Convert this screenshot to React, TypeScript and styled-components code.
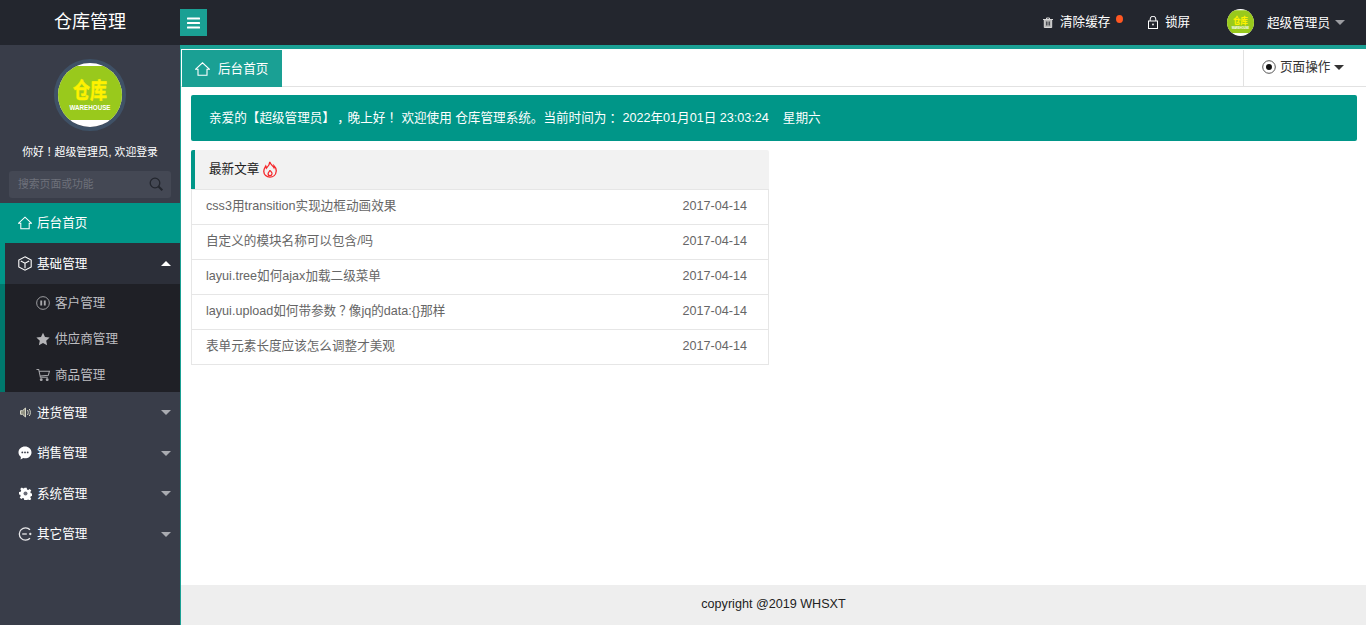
import React from "react";
import styled, { createGlobalStyle } from "styled-components";

const Global = createGlobalStyle`
  html, body { margin: 0; padding: 0; height: 100%; }
  body { font-family: "Liberation Sans", "Noto Sans CJK SC", sans-serif; font-size: 12.6px; line-height: 18px; color: #333; background: #fff; overflow: hidden; }
  * { box-sizing: border-box; }
`;

const Page = styled.div`
  display: flex;
  flex-direction: column;
  height: 625px;
  width: 1366px;
`;
const Header = styled.header`
  flex: 0 0 45px;
  display: flex;
  align-items: center;
  background: #23262e;
  color: #fff;
`;
const Brand = styled.div`
  width: 180px;
  text-align: center;
  font-size: 18px;
  line-height: 45px;
`;
const MenuButton = styled.div`
  width: 27px;
  height: 27px;
  background: #1aa094;
  display: flex;
  align-items: center;
  justify-content: center;
`;
const HeaderRight = styled.div`
  margin-left: auto;
  display: flex;
  align-items: center;
`;
const HeaderAction = styled.div<{ $w: number }>`
  position: relative;
  width: ${(p) => p.$w}px;
  display: flex;
  align-items: center;
  gap: 7px;
  line-height: 45px;
`;
const Dot = styled.span`
  position: absolute;
  left: 73px;
  top: 15px;
  width: 7px;
  height: 8px;
  border-radius: 50%;
  background: #ff5722;
`;
const UserBlock = styled.div`
  width: 139px;
  display: flex;
  align-items: center;
`;
const UserName = styled.span`
  margin-left: 13px;
  margin-right: 5px;
`;
const Caret = styled.span<{ $color: string; $up?: boolean }>`
  width: 0;
  height: 0;
  border-left: 5.5px solid transparent;
  border-right: 5.5px solid transparent;
  ${(p) =>
    p.$up
      ? `border-bottom: 5px solid ${p.$color};`
      : `border-top: 5px solid ${p.$color};`}
`;
const Punct = styled.span`
  display: inline-block;
  width: 1em;
  text-align: center;
  font-feature-settings: "palt";
`;
const Body = styled.div`
  flex: 1;
  display: flex;
  min-height: 0;
`;
const Sidebar = styled.aside`
  flex: 0 0 180px;
  background: #393d49;
  color: #fff;
  display: flex;
  flex-direction: column;
`;
const Profile = styled.div`
  padding-top: 14px;
  display: flex;
  flex-direction: column;
  align-items: center;
`;
const Greeting = styled.div`
  margin-top: 12px;
  font-size: 10.8px;
  line-height: 18px;
  height: 18px;
  white-space: nowrap;
`;
const SearchBox = styled.div`
  margin: 10px 9px 5px;
  width: 162px;
  height: 27px;
  border-radius: 3px;
  background: #444854;
  display: flex;
  align-items: center;
  padding: 0 8px 2px 9px;
  justify-content: space-between;
  color: #6e717b;
  font-size: 10.8px;
`;
const MenuItem = styled.div<{ $variant?: "active" | "open" }>`
  height: 40.4px;
  display: flex;
  align-items: center;
  padding-left: ${(p) => (p.$variant === "open" ? 13 : 18)}px;
  padding-right: 9px;
  padding-top: ${(p) => (p.$variant ? 0 : 2)}px;
  gap: 5px;
  background: ${(p) =>
    p.$variant === "active" ? "#009688" : p.$variant === "open" ? "#2c2f39" : "transparent"};
`;
const MenuLabel = styled.span`
  flex: 1;
`;
const IconSlot = styled.span`
  width: 14px;
  height: 16px;
  display: flex;
  align-items: center;
  justify-content: center;
`;
const OpenGroup = styled.div`
  border-left: 5px solid #009688;
`;
const SubGroup = styled.div`
  margin-left: -5px;
  border-left: 5px solid #00786c;
  background: #1f2026;
`;
const SubItem = styled.div`
  height: 36px;
  display: flex;
  align-items: center;
  padding-left: 31px;
  padding-top: 2px;
  gap: 5px;
  color: #bdbdc0;
`;
const Main = styled.main`
  flex: 1;
  display: flex;
  flex-direction: column;
  min-width: 0;
  border-left: 1px solid #1aa094;
  border-top: 4px solid #1aa094;
`;
const TabBar = styled.div`
  flex: 0 0 38px;
  display: flex;
  justify-content: space-between;
  padding: 1px 0 0 1px;
  border-bottom: 1px solid #e2e2e2;
`;
const Tab = styled.div`
  width: 100px;
  height: 37px;
  margin-bottom: -1px;
  background: #1aa094;
  color: #fff;
  display: flex;
  align-items: center;
  padding-left: 13px;
  gap: 8px;
`;
const PageOps = styled.div`
  width: 123px;
  height: 36px;
  border-left: 1px solid #e2e2e2;
  display: flex;
  align-items: center;
  padding-left: 18px;
  padding-bottom: 2px;
  color: #333;
  gap: 4px;
`;
const Content = styled.div`
  flex: 1;
  padding: 8px 9px 0 10px;
`;
const Banner = styled.div`
  height: 46px;
  background: #009688;
  border-radius: 2px;
  color: #fff;
  display: flex;
  align-items: center;
  padding-left: 18px;
  white-space: pre;
`;
const Card = styled.section`
  width: 578px;
  margin-top: 9px;
`;
const CardHead = styled.div`
  height: 39px;
  background: #f2f2f2;
  border-left: 4px solid #009688;
  border-radius: 2px 2px 0 0;
  display: flex;
  align-items: center;
  padding-left: 14px;
  padding-bottom: 1px;
  gap: 4px;
  color: #222;
`;
const List = styled.ul`
  list-style: none;
  margin: 0;
  padding: 0;
  border: 1px solid #e6e6e6;
`;
const Row = styled.li`
  height: 35px;
  display: flex;
  align-items: center;
  justify-content: space-between;
  padding: 0 21px 2px 14px;
  color: #666;
  border-bottom: 1px solid #e6e6e6;
  &:last-child { border-bottom: 0; height: 34px; }
`;
const Footer = styled.footer`
  flex: 0 0 40px;
  background: #eeeeee;
  display: flex;
  align-items: center;
  justify-content: center;
  padding-bottom: 2px;
  color: #222;
`;

const LogoMark = ({ size, ring }: { size: number; ring?: boolean }) => (
  <svg width={size} height={size} viewBox={ring ? "0 0 72 72" : "4 4 64 64"}>
    <defs>
      <clipPath id={`lm${size}`}>
        <circle cx="36" cy="36" r="32" />
      </clipPath>
    </defs>
    {ring && <circle cx="36" cy="36" r="34" fill="none" stroke="#3f5166" strokeWidth="4" />}
    <circle cx="36" cy="36" r="32" fill="#fff" />
    <rect x="0" y="7" width="72" height="54" fill="#99c91c" clipPath={`url(#lm${size})`} />
    <text transform="translate(36 39) scale(1 1.25)" textAnchor="middle" fontSize="17" fontWeight="700" fill="#fff200" stroke="#fff200" strokeWidth=".4" fontFamily="'Noto Sans CJK SC', sans-serif">仓库</text>
    <text x="36" y="50.500" textAnchor="middle" fontSize="7.500" fontWeight="700" fill="#fff" textLength="41" lengthAdjust="spacingAndGlyphs" fontFamily="'Liberation Sans', sans-serif">WAREHOUSE</text>
  </svg>
);

const HomeIcon = ({ color }: { color: string }) => (
  <svg width="15" height="14" viewBox="0 0 15 14" fill="none" stroke={color} strokeWidth="1.1">
    <path d="M.7 7.2 7.5.8l6.8 6.4H12v6H3v-6z" />
  </svg>
);

const CubeIcon = () => (
  <svg width="14" height="15" viewBox="0 0 14 15" fill="none" stroke="#fff" strokeWidth="1.1">
    <path d="M7 .8 13.2 4v7L7 14.2.8 11V4z" />
    <path d="M2.800 4.900 7 7.200l4.200-2.300M7 7.200v5" />
  </svg>
);

const PauseIcon = () => (
  <svg width="14" height="14" viewBox="0 0 15 15" fill="none" stroke="#a7a7ab">
    <circle cx="7.5" cy="7.5" r="6.8" />
    <path d="M5.600 4.800v5.400M9.400 4.800v5.400" strokeWidth="2" />
  </svg>
);

const StarIcon = () => (
  <svg width="14" height="14" viewBox="0 0 14 14" fill="#b5b5b8">
    <path d="m7 .7 2 4.200 4.600.6-3.400 3.200.9 4.600L7 10.900 2.900 13.300l.9-4.600L.4 5.500 5 4.900z" />
  </svg>
);

const CartIcon = () => (
  <svg width="14" height="14" viewBox="0 0 15 14" fill="none" stroke="#a7a7ab" strokeWidth="1.1">
    <path d="M.5 1h2.400l1.800 8.500h8M3.400 3h11l-1.200 4.200-8.800.8" />
    <circle cx="5.600" cy="12" r="1" fill="#a7a7ab" />
    <circle cx="12" cy="12" r="1" fill="#a7a7ab" />
  </svg>
);

const SpeakerIcon = () => (
  <svg width="11" height="11" viewBox="0 0 11 11" fill="none" stroke="#d8d8c8" strokeWidth="1">
    <path d="M.5 3.700h2L5.500 1v9L2.500 7.300h-2z" fill="#8f8f80" />
    <path d="M7.500 3c.9 1.400.9 3.600 0 5M9.300 2c1.400 2.100 1.400 5 0 7" />
  </svg>
);

const ChatIcon = () => (
  <svg width="14" height="14" viewBox="0 0 14 14">
    <path d="M7 .5c3.600 0 6.500 2.600 6.500 5.900S10.600 12.300 7 12.300c-.6 0-1.200-.1-1.700-.2L2.600 13.600l.3-2.700C1.400 9.800.5 8.200.5 6.400.5 3.100 3.400.5 7 .5z" fill="#fff" />
    <circle cx="4.300" cy="6.400" r=".9" fill="#393d49" />
    <circle cx="7" cy="6.400" r=".9" fill="#393d49" />
    <circle cx="9.700" cy="6.400" r=".9" fill="#393d49" />
  </svg>
);

const GearIcon = () => (
  <svg width="13" height="13" viewBox="0 0 13 13">
    <path d="M5.300.5h2.400l.3 1.700 1.200.5 1.500-1 1.600 1.600-1 1.500.5 1.200 1.700.3v2.400l-1.700.3-.5 1.200 1 1.500-1.600 1.600-1.500-1-1.200.5-.3 1.700H5.300L5 11.300l-1.200-.5-1.500 1-1.600-1.600 1-1.500-.5-1.200L0 7.200V4.800l1.700-.3.500-1.200-1-1.500L2.800.2l1.500 1 1.200-.5z" fill="#fff" transform="translate(0 .2)" />
    <circle cx="6.500" cy="6.500" r="2" fill="#6a6d78" />
  </svg>
);

const OtherIcon = () => (
  <svg width="14" height="14" viewBox="0 0 14 14" fill="none" stroke="#e8e8ea" strokeWidth="1.300">
    <path d="M12 2.700A6.200 6.200 0 1 0 12 11.300" />
    <path d="M4.200 7h4.600" />
    <circle cx="12.300" cy="7" r=".5" />
  </svg>
);

const BarsIcon = () => (
  <svg width="13" height="12" viewBox="0 0 13 12" fill="#fff">
    <rect y="0.500" width="13" height="2" rx=".5" />
    <rect y="5" width="13" height="2" rx=".5" />
    <rect y="9.500" width="13" height="2" rx=".5" />
  </svg>
);

const TrashIcon = () => (
  <svg width="10" height="11" viewBox="0 0 10 11" fill="none" stroke="#d8d8d8">
    <path d="M0 2.500h10M3.500 2.500V1h3v1.500" />
    <path d="M1.300 2.500h7.400v8H1.300z" fill="#b8b8b8" />
    <path d="M3.500 4.500v4M5 4.500v4M6.500 4.500v4" stroke="#30333b" strokeWidth=".8" />
  </svg>
);

const LockIcon = () => (
  <svg width="10" height="13" viewBox="0 0 10 13" fill="none" stroke="#fff">
    <rect x=".5" y="5" width="9" height="7.500" />
    <path d="M2.200 5V3a2.800 2.800 0 0 1 5.600 0v2" />
    <circle cx="5" cy="8.500" r=".9" fill="#fff" stroke="none" />
  </svg>
);

const RadioIcon = () => (
  <svg width="14" height="14" viewBox="0 0 14 14">
    <circle cx="7" cy="7" r="6.300" fill="none" stroke="#555" />
    <circle cx="7" cy="7" r="3" fill="#111" />
  </svg>
);

const SearchIcon = () => (
  <svg width="14" height="14" viewBox="0 0 14 14" fill="none" stroke="#23262e" strokeWidth="1.300">
    <circle cx="6" cy="6" r="4.800" />
    <path d="m9.500 9.500 3.800 3.800" strokeWidth="2" />
  </svg>
);

const FlameIcon = () => (
  <svg width="14" height="17" viewBox="0 0 14 17" fill="none" stroke="#f5262a" strokeWidth="1.300">
    <path d="M6.800.8c.6 2.800 3 3.600 4.200 6 .2-.6.300-1.200.1-1.900 1.600 1.500 2.300 3.400 2.100 5.300-.3 3.600-3 6-6.300 6S.9 13.800.8 10.400C.7 8 2 6.800 2.800 5c.4.800.6 1.400.7 2.100C5 5.600 6.800 3.500 6.800.8z" />
    <path d="M7 9c.2 1.200 2.300 2 2 3.900-.2 1.100-1 1.700-2 1.700s-1.900-.8-1.900-1.900c0-1.500 1.700-2 1.900-3.700z" />
  </svg>
);

const menus: [string, React.ReactNode][] = [
  ["进货管理", <SpeakerIcon />],
  ["销售管理", <ChatIcon />],
  ["系统管理", <GearIcon />],
  ["其它管理", <OtherIcon />],
];

const articles: React.ReactNode[] = [
  "css3用transition实现边框动画效果",
  "自定义的模块名称可以包含/吗",
  "layui.tree如何ajax加载二级菜单",
  <>layui.upload如何带参数<Punct>？</Punct>像jq的data:{"{}"}那样</>,
  "表单元素长度应该怎么调整才美观",
];

export default function App() {
  return (
    <Page>
      <Global />
      <Header>
        <Brand>仓库管理</Brand>
        <MenuButton><BarsIcon /></MenuButton>
        <HeaderRight>
          <HeaderAction $w={105}>
            <TrashIcon />
            <span>清除缓存</span>
            <Dot />
          </HeaderAction>
          <HeaderAction $w={79}>
            <LockIcon />
            <span>锁屏</span>
          </HeaderAction>
          <UserBlock>
            <LogoMark size={27} />
            <UserName>超级管理员</UserName>
            <Caret $color="#9b9ca1" />
          </UserBlock>
        </HeaderRight>
      </Header>
      <Body>
        <Sidebar>
          <Profile>
            <LogoMark size={72} ring />
            <Greeting>你好<Punct>！</Punct>超级管理员, 欢迎登录</Greeting>
          </Profile>
          <SearchBox>
            <span>搜索页面或功能</span>
            <SearchIcon />
          </SearchBox>
          <MenuItem $variant="active">
            <IconSlot><HomeIcon color="#fff" /></IconSlot>
            <MenuLabel>后台首页</MenuLabel>
          </MenuItem>
          <OpenGroup>
            <MenuItem $variant="open">
              <IconSlot><CubeIcon /></IconSlot>
              <MenuLabel>基础管理</MenuLabel>
              <Caret $color="#fff" $up />
            </MenuItem>
            <SubGroup>
              <SubItem>
                <IconSlot><PauseIcon /></IconSlot>
                <span>客户管理</span>
              </SubItem>
              <SubItem>
                <IconSlot><StarIcon /></IconSlot>
                <span>供应商管理</span>
              </SubItem>
              <SubItem>
                <IconSlot><CartIcon /></IconSlot>
                <span>商品管理</span>
              </SubItem>
            </SubGroup>
          </OpenGroup>
          {menus.map(([label, icon]) => (
            <MenuItem key={label}>
              <IconSlot>{icon}</IconSlot>
              <MenuLabel>{label}</MenuLabel>
              <Caret $color="#a9abb1" />
            </MenuItem>
          ))}
        </Sidebar>
        <Main>
          <TabBar>
            <Tab>
              <HomeIcon color="#fff" />
              <span>后台首页</span>
            </Tab>
            <PageOps>
              <RadioIcon />
              <span>页面操作</span>
              <Caret $color="#333" />
            </PageOps>
          </TabBar>
          <Content>
            <Banner>
              <span>亲爱的【超级管理员】<Punct>，</Punct>晚上好<Punct>！</Punct> 欢迎使用 仓库管理系统。当前时间为<Punct>：</Punct> 2022年01月01日 23:03:24    星期六</span>
            </Banner>
            <Card>
              <CardHead>
                <span>最新文章</span>
                <FlameIcon />
              </CardHead>
              <List>
                {articles.map((a, i) => (
                  <Row key={i}>
                    <span>{a}</span>
                    <span>2017-04-14</span>
                  </Row>
                ))}
              </List>
            </Card>
          </Content>
          <Footer>copyright @2019 WHSXT</Footer>
        </Main>
      </Body>
    </Page>
  );
}
